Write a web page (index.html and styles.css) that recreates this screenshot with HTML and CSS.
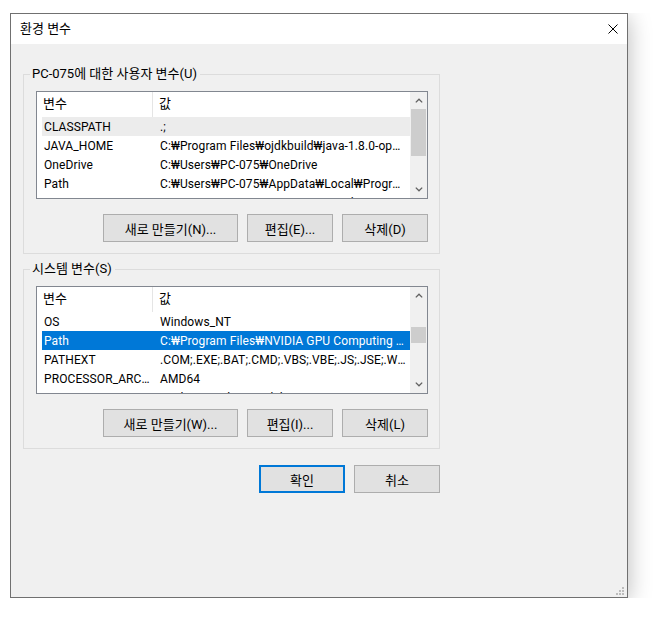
FILE: index.html
```html
<!DOCTYPE html>
<html lang="ko">
  <head>
    <meta charset="UTF-8" />
    <meta name="viewport" content="width=device-width, initial-scale=1.0" />
    <title>환경 변수</title>

    <link rel="stylesheet" href="styles.css">
  </head>
  <body>
    <div class="window">
      <div class="titlebar">
        <span class="title">환경 변수</span>
        <span class="close">
          <svg width="10" height="10" viewBox="0 0 10 10">
            <path d="M0.5 0.5L9.5 9.5M9.5 0.5L0.5 9.5" stroke="#000" stroke-width="1" fill="none" />
          </svg>
        </span>
      </div>

      <div class="content">
        <!-- User variables -->
        <fieldset class="group">
          <legend>PC-075에 대한 사용자 변수(U)</legend>
          <div class="list">
            <div class="list-body">
              <div class="list-head"><span>변수</span><span>값</span></div>
              <div class="row hover"><span>CLASSPATH</span><span>.;</span></div>
              <div class="row"><span>JAVA_HOME</span><span>C:₩Program Files₩ojdkbuild₩java-1.8.0-openjdk-1.8.0.252-2</span></div>
              <div class="row"><span>OneDrive</span><span>C:₩Users₩PC-075₩OneDrive</span></div>
              <div class="row"><span>Path</span><span>C:₩Users₩PC-075₩AppData₩Local₩Programs₩Python₩Python38₩Scripts₩</span></div>
              <div class="row"><span>TEMP</span><span>C:₩Users₩PC-075₩AppData₩Local₩Temp</span></div>
            </div>
            <div class="scrollbar">
              <div class="arrow">
                <svg width="8" height="5" viewBox="0 0 8 5"><path d="M0.8 4.4L4 1.2L7.2 4.4" stroke="#606060" stroke-width="1.3" fill="none" /></svg>
              </div>
              <div class="track"><div class="thumb" style="margin-top: 0; height: 47px"></div></div>
              <div class="arrow">
                <svg width="8" height="5" viewBox="0 0 8 5"><path d="M0.8 0.6L4 3.8L7.2 0.6" stroke="#606060" stroke-width="1.3" fill="none" /></svg>
              </div>
            </div>
          </div>
          <div class="buttons">
            <button class="btn wide">새로 만들기(N)...</button>
            <button class="btn">편집(E)...</button>
            <button class="btn">삭제(D)</button>
          </div>
        </fieldset>

        <!-- System variables -->
        <fieldset class="group">
          <legend>시스템 변수(S)</legend>
          <div class="list">
            <div class="list-body">
              <div class="list-head"><span>변수</span><span>값</span></div>
              <div class="row"><span>OS</span><span>Windows_NT</span></div>
              <div class="row selected"><span>Path</span><span>C:₩Program Files₩NVIDIA GPU Computing Toolkit₩CUDA₩v10.1₩bin</span></div>
              <div class="row"><span>PATHEXT</span><span>.COM;.EXE;.BAT;.CMD;.VBS;.VBE;.JS;.JSE;.WSF;.WSH;.MSC</span></div>
              <div class="row"><span>PROCESSOR_ARCHITECTURE</span><span>AMD64</span></div>
              <div class="row"><span>PROCESSOR_IDENTIFIER</span><span>Intel64 Family 6 Model 158 Stepping 10, GenuineIntel</span></div>
            </div>
            <div class="scrollbar">
              <div class="arrow">
                <svg width="8" height="5" viewBox="0 0 8 5"><path d="M0.8 4.4L4 1.2L7.2 4.4" stroke="#606060" stroke-width="1.3" fill="none" /></svg>
              </div>
              <div class="track"><div class="thumb" style="margin-top: 23px; height: 16px"></div></div>
              <div class="arrow">
                <svg width="8" height="5" viewBox="0 0 8 5"><path d="M0.8 0.6L4 3.8L7.2 0.6" stroke="#606060" stroke-width="1.3" fill="none" /></svg>
              </div>
            </div>
          </div>
          <div class="buttons">
            <button class="btn wide">새로 만들기(W)...</button>
            <button class="btn">편집(I)...</button>
            <button class="btn">삭제(L)</button>
          </div>
        </fieldset>

        <div class="dialog-buttons">
          <button class="btn default">확인</button>
          <button class="btn">취소</button>
        </div>
      </div>

      <svg class="grip" width="9" height="9" viewBox="0 0 9 9">
        <rect x="6" y="0" width="2" height="2" fill="#bcbcbc" />
        <rect x="3" y="3" width="2" height="2" fill="#bcbcbc" />
        <rect x="6" y="3" width="2" height="2" fill="#bcbcbc" />
        <rect x="0" y="6" width="2" height="2" fill="#bcbcbc" />
        <rect x="3" y="6" width="2" height="2" fill="#bcbcbc" />
        <rect x="6" y="6" width="2" height="2" fill="#bcbcbc" />
      </svg>
    </div>
  </body>
</html>
```

FILE: styles.css
```css
/* Page */
body {
  margin: 13px 0 0 10px;
  background: #ffffff;
  font-family: Roboto, "Noto Sans CJK KR", sans-serif;
  font-size: 12px;
  color: #000;
}

/* Dialog window */
.window {
  position: relative;
  box-sizing: border-box;
  width: 618px;
  height: 585px;
  border: 1px solid #707070;
  background: #f0f0f0;
  box-shadow: 0 4px 22px rgba(0, 0, 0, 0.28);
}

.titlebar {
  display: flex;
  align-items: center;
  justify-content: space-between;
  height: 30px;
  padding: 0 9px;
  background: #ffffff;
}

/* Korean labels render a bit larger in the original font */
.title,
.group legend,
.list-head,
.btn {
  font-size: 13px;
}

.title {
  line-height: 16px;
}

.close {
  display: flex;
}

.content {
  padding: 22px 0 0 12px;
}

/* Group boxes */
.group {
  box-sizing: border-box;
  width: 417px;
  margin: 0 0 7px 0;
  padding: 9px 11px 11px 12px;
  border: 1px solid #dcdcdc;
  min-width: 0;
}

.group legend {
  margin-left: -6px;
  padding: 0 3px 0 2px;
  line-height: 16px;
}

/* List views */
.list {
  display: flex;
  height: 108px;
  box-sizing: border-box;
  border: 1px solid #828790;
  background: #ffffff;
}

.list-body {
  flex: 1;
  min-width: 0;
  overflow: hidden;
}

.list-head,
.row {
  display: grid;
  grid-template-columns: 111px 1fr;
  margin-left: 5px;
}

.list-head {
  height: 25px;
  line-height: 23px;
}

.list-head span:first-child {
  padding-left: 1px;
  border-right: 1px solid #e5e5e5;
}

.list-head span:last-child {
  padding-left: 6px;
}

.row {
  height: 19px;
  line-height: 21px;
  letter-spacing: 0.1px;
}

.row span {
  overflow: hidden;
  white-space: nowrap;
  text-overflow: ellipsis;
}

.row span:first-child {
  padding-left: 2px;
  padding-right: 3px;
}

.row span:last-child {
  padding-left: 7px;
  padding-right: 4px;
}

.row.hover {
  background: #ececec;
}

.row.selected {
  background: #0078d7;
  color: #ffffff;
}

/* Scrollbar */
.scrollbar {
  display: flex;
  flex-direction: column;
  width: 17px;
  background: #f0f0f0;
}

.arrow {
  display: flex;
  align-items: center;
  justify-content: center;
  height: 17px;
}

.track {
  flex: 1;
}

.thumb {
  margin: 0 1px;
  background: #cdcdcd;
}

/* Buttons */
.buttons {
  display: flex;
  justify-content: flex-end;
  gap: 9px;
  margin-top: 15px;
}

.btn {
  box-sizing: border-box;
  width: 86px;
  height: 28px;
  padding: 0;
  border: 1px solid #adadad;
  background: #e1e1e1;
  font-family: inherit;
  color: #000;
}

.btn.wide {
  width: 135px;
}

.btn.default {
  border: 2px solid #0078d7;
}

.dialog-buttons {
  display: flex;
  justify-content: flex-end;
  gap: 9px;
  width: 417px;
  margin-top: 16px;
}

/* Resize grip */
.grip {
  position: absolute;
  right: 2px;
  bottom: 1px;
}
```
